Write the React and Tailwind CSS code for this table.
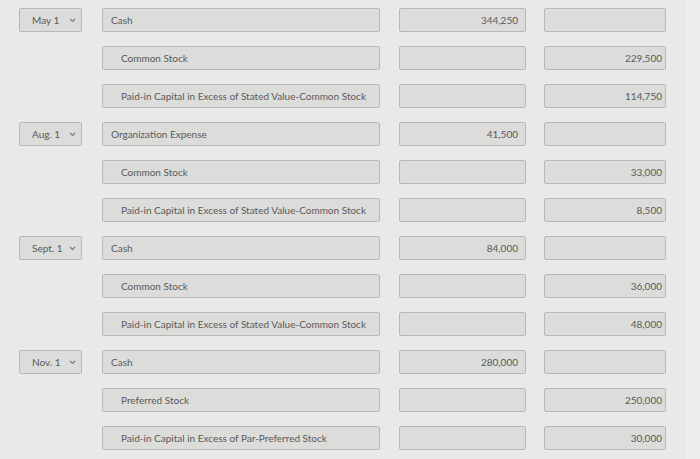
import React from 'react';

const entries = [
  {
    date: 'May 1',
    lines: [
      { account: 'Cash', debit: '344,250' },
      { account: 'Common Stock', credit: '229,500' },
      { account: 'Paid-in Capital in Excess of Stated Value-Common Stock', credit: '114,750' },
    ],
  },
  {
    date: 'Aug. 1',
    lines: [
      { account: 'Organization Expense', debit: '41,500' },
      { account: 'Common Stock', credit: '33,000' },
      { account: 'Paid-in Capital in Excess of Stated Value-Common Stock', credit: '8,500' },
    ],
  },
  {
    date: 'Sept. 1',
    lines: [
      { account: 'Cash', debit: '84,000' },
      { account: 'Common Stock', credit: '36,000' },
      { account: 'Paid-in Capital in Excess of Stated Value-Common Stock', credit: '48,000' },
    ],
  },
  {
    date: 'Nov. 1',
    lines: [
      { account: 'Cash', debit: '280,000' },
      { account: 'Preferred Stock', credit: '250,000' },
      { account: 'Paid-in Capital in Excess of Par-Preferred Stock', credit: '30,000' },
    ],
  },
];

const boxClass =
  'h-6 border border-[#b9b9b7] bg-[#dcdcda] rounded-[2px] flex items-center text-[10px] text-[#5a5a5a]';

const DateSelect = ({ value }) => (
  <div className={`${boxClass} w-[63px] pl-3 pr-[5px] justify-between`}>
    <span>{value}</span>
    <svg width="7" height="5" viewBox="0 0 7 5" className="shrink-0">
      <path d="M1 1l2.5 2.5L6 1" fill="none" stroke="#777" strokeWidth="1.1" />
    </svg>
  </div>
);

const App = () => {
  return (
    <div
      className="w-[700px] h-[459px] bg-[#e9e9e7] overflow-hidden flex"
      style={{ fontFamily: 'Lato, "Open Sans", sans-serif' }}
    >
      <div className="flex-1 pl-[19px] pt-[8px] flex flex-col gap-[14px]">
        {entries.map((entry) =>
          entry.lines.map((line, i) => (
            <div key={entry.date + i} className="flex items-center">
              <div className="w-[63px] mr-[20px]">
                {i === 0 && <DateSelect value={entry.date} />}
              </div>
              <div className={`${boxClass} w-[278px] ${i === 0 ? 'pl-2' : 'pl-[18px]'}`}>
                {line.account}
              </div>
              <div className={`${boxClass} w-[127px] ml-[19px] justify-end pr-[7px]`}>
                {line.debit}
              </div>
              <div className={`${boxClass} w-[122px] ml-[18px] justify-end pr-[3px]`}>
                {line.credit}
              </div>
            </div>
          ))
        )}
      </div>
      <div className="w-[16px] h-full bg-[#eeeeec] border-l border-[#e2e2e0]" />
    </div>
  );
};

export default App;
